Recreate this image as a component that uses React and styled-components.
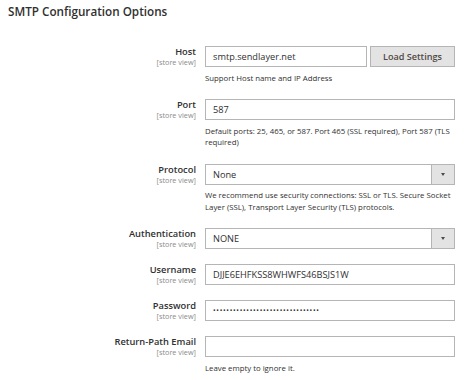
import React from 'react';
import styled, { createGlobalStyle } from 'styled-components';

const GlobalStyle = createGlobalStyle`
  html, body {
    margin: 0;
    padding: 0;
    background: #ffffff;
  }
  body {
    font-family: "Open Sans", "Liberation Sans", sans-serif;
    color: #303030;
  }
`;

const Page = styled.div`
  width: 474px;
  height: 380px;
  padding: 3px 0 0 8px;
  box-sizing: border-box;
  overflow: hidden;
`;

const Title = styled.h2`
  margin: 0 0 26px;
  font-size: 11.7px;
  line-height: 17px;
  font-weight: 600;
  color: #303030;
`;

const Row = styled.div`
  display: grid;
  grid-template-columns: 188px 250px;
  column-gap: 9px;
  margin-bottom: 15px;
`;

const LabelCell = styled.div`
  text-align: right;
`;

const Label = styled.div`
  font-size: 9.3px;
  line-height: 12px;
  font-weight: 600;
  color: #303030;
`;

const Scope = styled.div`
  font-size: 7.3px;
  line-height: 9px;
  color: #8a8a8a;
`;

const Field = styled.div`
  display: flex;
  flex-direction: column;
`;

const Line = styled.div`
  display: flex;
  gap: 3px;
`;

const Input = styled.input`
  flex: ${(p) => (p.$grow ? '1 1 0' : 'none')};
  min-width: 0;
  height: 21px;
  box-sizing: border-box;
  border: 1px solid #b5b5b5;
  background: #fff;
  padding: 0 7px;
  font-family: "Open Sans", "Liberation Sans", sans-serif;
  font-size: ${(p) => (p.type === 'password' ? '7px' : '9.2px')};
  letter-spacing: ${(p) => (p.type === 'password' ? '0.7px' : '0')};
  color: #303030;
  outline: none;
`;

const Button = styled.button`
  flex: none;
  width: 85px;
  height: 21px;
  box-sizing: border-box;
  border: 1px solid #b5b5b5;
  background: #e3e3e3;
  font-family: "Open Sans", "Liberation Sans", sans-serif;
  font-size: 9.1px;
  font-weight: 600;
  color: #514943;
  padding: 0;
`;

const SelectBox = styled.div`
  display: flex;
  flex: none;
  height: 21px;
  box-sizing: border-box;
  border: 1px solid #b5b5b5;
  background: #fff;
`;

const SelectValue = styled.div`
  flex: 1;
  padding-left: 7px;
  font-size: 9.2px;
  line-height: 19px;
  color: #303030;
`;

const Arrow = styled.div`
  width: 22px;
  border-left: 1px solid #b5b5b5;
  background: #e3e3e3;
  display: flex;
  align-items: center;
  justify-content: center;
  &::after {
    content: '';
    border-left: 2.5px solid transparent;
    border-right: 2.5px solid transparent;
    border-top: 3px solid #514943;
  }
`;

const Note = styled.div`
  margin-top: 5.5px;
  font-size: 7.8px;
  line-height: 11.5px;
  color: #303030;
`;

const Select = ({ value }) => (
  <SelectBox>
    <SelectValue>{value}</SelectValue>
    <Arrow />
  </SelectBox>
);

const Setting = ({ label, children, note }) => (
  <Row>
    <LabelCell>
      <Label>{label}</Label>
      <Scope>[store view]</Scope>
    </LabelCell>
    <Field>
      {children}
      {note && <Note>{note}</Note>}
    </Field>
  </Row>
);

export default function App() {
  return (
    <Page>
      <GlobalStyle />
      <Title>SMTP Configuration Options</Title>

      <Setting label="Host" note="Support Host name and IP Address">
        <Line>
          <Input $grow readOnly value="smtp.sendlayer.net" />
          <Button>Load Settings</Button>
        </Line>
      </Setting>

      <Setting
        label="Port"
        note="Default ports: 25, 465, or 587. Port 465 (SSL required), Port 587 (TLS required)"
      >
        <Input readOnly value="587" />
      </Setting>

      <Setting
        label="Protocol"
        note="We recommend use security connections: SSL or TLS. Secure Socket Layer (SSL), Transport Layer Security (TLS) protocols."
      >
        <Select value="None" />
      </Setting>

      <Setting label="Authentication">
        <Select value="NONE" />
      </Setting>

      <Setting label="Username">
        <Input readOnly value="DJJE6EHFKSS8WHWFS46BSJS1W" />
      </Setting>

      <Setting label="Password">
        <Input readOnly type="password" value="abcdefghijklmnopqrstuvwxyzabcdef" />
      </Setting>

      <Setting label="Return-Path Email" note="Leave empty to ignore it.">
        <Input readOnly value="" />
      </Setting>
    </Page>
  );
}
